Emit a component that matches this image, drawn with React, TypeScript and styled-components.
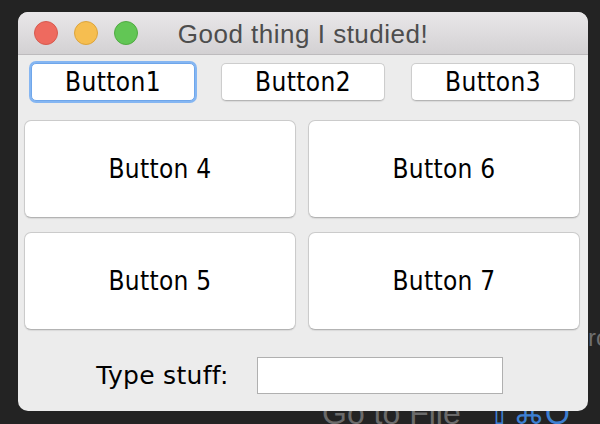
import React, { FC } from 'react'
import styled, { createGlobalStyle } from 'styled-components'

const GlobalStyle = createGlobalStyle`
  html, body {
    margin: 0;
    padding: 0;
    background: #232323;
  }
`

const Desktop = styled.div`
  position: relative;
  width: 600px;
  height: 424px;
  overflow: hidden;
  background: #232323;
  padding: 12px 0 0 18px;
  box-sizing: border-box;
`

const BackdropText = styled.span<{ left: number; top: number; color: string; size: number }>`
  position: absolute;
  left: ${(props): number => props.left}px;
  top: ${(props): number => props.top}px;
  color: ${(props): string => props.color};
  font-family: 'Liberation Sans', Arial, sans-serif;
  font-size: ${(props): number => props.size}px;
  line-height: 1;
  white-space: nowrap;
`

const Window = styled.div`
  position: relative;
  z-index: 1;
  width: 570px;
  height: 399px;
  background: #ececec;
  border-radius: 10px;
  overflow: hidden;
  display: flex;
  flex-direction: column;
`

const TitleBar = styled.div`
  height: 42px;
  flex-shrink: 0;
  display: grid;
  grid-template-columns: 1fr auto 1fr;
  align-items: center;
  background: linear-gradient(#e9e7e9, #d3d1d3);
  border-bottom: 1px solid #bdbbbd;
`

const Lights = styled.div`
  display: flex;
  gap: 16px;
  padding-left: 16px;
`

const Light = styled.span<{ fill: string; edge: string }>`
  width: 24px;
  height: 24px;
  border-radius: 50%;
  box-sizing: border-box;
  background: ${(props): string => props.fill};
  border: 1px solid ${(props): string => props.edge};
`

const Title = styled.div`
  font-family: 'Liberation Sans', Arial, sans-serif;
  font-size: 26px;
  letter-spacing: 0.5px;
  color: #4d4d4d;
  margin-top: 2px;
`

const TopRow = styled.div`
  display: flex;
  justify-content: center;
  gap: 26px;
  margin-top: 8px;
`

const SmallButton = styled.button<{ focused?: boolean }>`
  width: 164px;
  height: 38px;
  box-sizing: border-box;
  background: #ffffff;
  border: 1px solid #cdcdcd;
  border-bottom-color: #b5b5b5;
  border-radius: 5px;
  padding: 0;
  font-family: 'DejaVu Sans Condensed', 'DejaVu Sans', sans-serif;
  font-stretch: condensed;
  font-size: 26px;
  letter-spacing: 0.4px;
  color: #000;
  box-shadow: ${(props): string =>
    props.focused ? '0 0 0 2px #85b6f2' : '0 1px 1px rgba(0, 0, 0, 0.08)'};
  ${(props): string => (props.focused ? 'border-color: #6fa6ea;' : '')}
`

const ButtonGrid = styled.div`
  display: grid;
  grid-template-columns: 272px 272px;
  grid-auto-rows: 98px;
  column-gap: 12px;
  row-gap: 14px;
  margin-top: 19px;
  padding-left: 6px;
`

const BigButton = styled.button`
  box-sizing: border-box;
  background: #ffffff;
  border: 1px solid #cbcbcb;
  border-bottom-color: #b3b3b3;
  border-radius: 7px;
  padding: 0;
  font-family: 'DejaVu Sans Condensed', 'DejaVu Sans', sans-serif;
  font-stretch: condensed;
  font-size: 26px;
  letter-spacing: 0.3px;
  color: #000;
  box-shadow: 0 1px 1px rgba(0, 0, 0, 0.08);
`

const FormRow = styled.div`
  display: flex;
  align-items: center;
  justify-content: center;
  gap: 28px;
  margin-top: 27px;
  padding-right: 7px;
`

const Label = styled.label`
  font-family: 'DejaVu Sans', sans-serif;
  font-size: 25px;
  letter-spacing: 0.3px;
  color: #000;
`

const TextField = styled.input`
  width: 246px;
  height: 37px;
  box-sizing: border-box;
  background: #ffffff;
  border: 1px solid #b0b0b0;
  outline: none;
  margin: 0;
`

const App: FC = () => (
  <>
    <GlobalStyle />
    <Desktop>
      <BackdropText left={588} top={326} color="#6f6f6f" size={24}>
        rc
      </BackdropText>
      <BackdropText left={322} top={397} color="#6b6b6b" size={32}>
        Go to File
      </BackdropText>
      <BackdropText left={486} top={397} color="#3d7fd1" size={32}>
        ⇧⌘O
      </BackdropText>
      <Window>
        <TitleBar>
          <Lights>
            <Light fill="#ee6a5f" edge="#d65a4f" />
            <Light fill="#f6be50" edge="#dca43c" />
            <Light fill="#62c655" edge="#50aa42" />
          </Lights>
          <Title>Good thing I studied!</Title>
          <span />
        </TitleBar>
        <TopRow>
          <SmallButton focused>Button1</SmallButton>
          <SmallButton>Button2</SmallButton>
          <SmallButton>Button3</SmallButton>
        </TopRow>
        <ButtonGrid>
          <BigButton>Button 4</BigButton>
          <BigButton>Button 6</BigButton>
          <BigButton>Button 5</BigButton>
          <BigButton>Button 7</BigButton>
        </ButtonGrid>
        <FormRow>
          <Label>Type stuff:</Label>
          <TextField type="text" />
        </FormRow>
      </Window>
    </Desktop>
  </>
)

export default App
